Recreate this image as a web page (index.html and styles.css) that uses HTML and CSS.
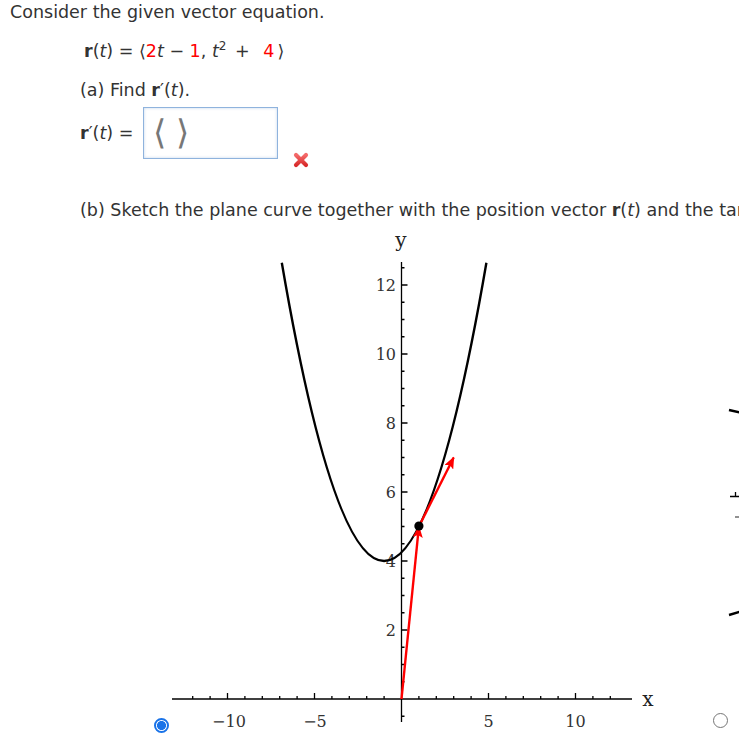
FILE: index.html
```html
<!DOCTYPE html>
<html>
<head>
<meta charset="utf-8">
<link rel="stylesheet" href="styles.css">
</head>
<body>
<div class="page">
  <p class="intro">Consider the given vector equation.</p>
  <p class="eq"><b>r</b>(<i>t</i>) = ⟨<span class="red">2</span><i>t</i> − <span class="red">1</span>, <i>t</i><sup>2</sup> <span class="plus">+</span> <span class="red">4</span><span class="close">⟩</span></p>
  <p class="part">(a) Find <b>r</b>′(<i>t</i>).</p>
  <div class="answer-row">
    <span class="lhs"><b>r</b>′(<i>t</i>) =</span>
    <div class="box"><span class="brk">⟨</span><span class="brk">⟩</span></div>
    <svg class="xmark" width="16" height="16" viewBox="0 0 16 16">
      <defs>
        <linearGradient id="xg" x1="0" y1="0" x2="0" y2="1">
          <stop offset="0" stop-color="#f46a6a"/>
          <stop offset="1" stop-color="#d92c2c"/>
        </linearGradient>
      </defs>
      <path d="M3 3 L13 13 M13 3 L3 13" stroke="url(#xg)" stroke-width="4.2" stroke-linecap="round"/>
    </svg>
  </div>
  <p class="part partb">(b) Sketch the plane curve together with the position vector <b>r</b>(<i>t</i>) and the tangent vector <b>r</b>′(<i>t</i>) for the given value of <i>t</i>.</p>
  <div class="graphs">
    <span class="radio on"></span>
    <svg class="graph" width="535" height="514" viewBox="170 228 535 514">
      <defs>
        <marker id="ah" viewBox="0 0 12 10" refX="11" refY="5" markerWidth="12" markerHeight="10" markerUnits="userSpaceOnUse" orient="auto">
          <path d="M0 0 L12 5 L0 10 L2.5 5 Z" fill="#f00"/>
        </marker>
      </defs>
      <g stroke="#000" stroke-width="1.3" fill="none">
        <path d="M172 699 H632"/>
        <path d="M401.5 262 V722"/>
        <path d="M192.7 699v-3 M210.1 699v-3 M227.5 699v-6 M244.9 699v-3 M262.3 699v-3 M279.7 699v-3 M297.1 699v-3 M314.5 699v-6 M331.9 699v-3 M349.3 699v-3 M366.7 699v-3 M384.1 699v-3 M418.9 699v-3 M436.3 699v-3 M453.7 699v-3 M471.1 699v-3 M488.5 699v-6 M505.9 699v-3 M523.3 699v-3 M540.7 699v-3 M558.1 699v-3 M575.5 699v-6 M592.9 699v-3 M610.3 699v-3"/>
        <path d="M401.5 716.25h3 M401.5 681.75h3 M401.5 664.5h3 M401.5 647.25h3 M401.5 630h6 M401.5 612.75h3 M401.5 595.5h3 M401.5 578.25h3 M401.5 561h6 M401.5 543.75h3 M401.5 526.5h3 M401.5 509.25h3 M401.5 492h6 M401.5 474.75h3 M401.5 457.5h3 M401.5 440.25h3 M401.5 423h6 M401.5 405.75h3 M401.5 388.5h3 M401.5 371.25h3 M401.5 354h6 M401.5 336.75h3 M401.5 319.5h3 M401.5 302.25h3 M401.5 285h6 M401.5 267.75h3"/>
      </g>
      <g class="lbl">
        <text x="396" y="291" text-anchor="end">12</text>
        <text x="396" y="360" text-anchor="end">10</text>
        <text x="396" y="429" text-anchor="end">8</text>
        <text x="396" y="498" text-anchor="end">6</text>
        <text x="396" y="567" text-anchor="end">4</text>
        <text x="396" y="636" text-anchor="end">2</text>
        <text x="229" y="727" text-anchor="middle">−10</text>
        <text x="315" y="727" text-anchor="middle">−5</text>
        <text x="488.5" y="727" text-anchor="middle">5</text>
        <text x="575.5" y="727" text-anchor="middle">10</text>
        <text class="axl" x="401" y="247" text-anchor="middle">y</text>
        <text class="axl" x="648" y="706" text-anchor="middle">x</text>
      </g>
      <path d="M281.8 262.8 Q384.1 859.2 486.4 262.8" stroke="#000" stroke-width="2.4" fill="none"/>
      <path d="M401.5 699 L418.9 526.5" stroke="#f00" stroke-width="2.4" fill="none" marker-end="url(#ah)"/>
      <path d="M418.9 526.5 L453.7 457.5" stroke="#f00" stroke-width="2.4" fill="none" marker-end="url(#ah)"/>
      <circle cx="418.9" cy="526" r="4.6" fill="#000"/>
    </svg>
    <span class="radio off"></span>
    <svg class="graph2" width="40" height="514" viewBox="727 228 40 514">
      <g stroke="#000" fill="none">
        <path d="M728 410 L745 414" stroke-width="2.4"/>
        <path d="M729 496.5 H745 M734.5 496.5 V492" stroke-width="1.3"/>
        <path d="M734 517 H745" stroke-width="1.3" stroke="#555"/>
        <path d="M728 615 L745 610" stroke-width="2.4"/>
      </g>
    </svg>
  </div>
</div>
</body>
</html>
```

FILE: styles.css
```css
html, body {
  margin: 0;
  padding: 0;
  background: #fff;
  overflow: hidden;
}
.page {
  width: 739px;
  height: 742px;
  overflow: hidden;
  font-family: "DejaVu Sans", Verdana, sans-serif;
  font-size: 17.5px;
  color: #333;
}
p { margin: 0; white-space: nowrap; }
.intro {
  padding: 1px 0 0 10px;
  line-height: 22px;
}
.eq {
  margin-top: 17px;
  padding-left: 84px;
  line-height: 22px;
}
.eq .plus { margin: 0 8px 0 3px; }
.eq .close { margin-left: 3px; }
.eq sup { font-size: 12px; line-height: 0; vertical-align: 7px; }
.red { color: #f00; }
b { font-weight: bold; }
.part {
  padding-left: 80px;
  line-height: 22px;
}
.eq + .part { margin-top: 17px; }
.answer-row {
  display: flex;
  align-items: center;
  padding-left: 80px;
  margin-top: 6px;
  height: 52px;
}
.lhs { margin-right: 10px; }
.box {
  box-sizing: border-box;
  width: 135px;
  height: 52px;
  border: 1px solid #8fb3dd;
  box-shadow: inset 0 0 3px rgba(120,160,210,0.45);
  display: flex;
  align-items: center;
  gap: 10px;
  padding: 0 0 3px 9px;
  color: #777;
  font-size: 34px;
  font-weight: 200;
}
.xmark {
  align-self: flex-end;
  margin: 0 0 -9px 15px;
}
.partb {
  margin-top: 40px;
  overflow: hidden;
}
.graphs {
  display: flex;
  align-items: flex-end;
  margin-top: 7px;
  height: 514px;
}
.radio {
  box-sizing: border-box;
  width: 15px;
  height: 15px;
  border-radius: 50%;
  flex: none;
}
.radio.on {
  margin: 0 1px 9px 154px;
  border: 2px solid #1a73e8;
  background: radial-gradient(circle, #1a73e8 0 4.2px, #fff 4.8px);
}
.radio.off {
  margin: 0 0 14px 8px;
  border: 1px solid #767676;
  background: #fff;
}
.graph, .graph2 { flex: none; display: block; }
.lbl text {
  font-family: "DejaVu Serif", "Liberation Serif", serif;
  font-size: 16px;
  fill: #333;
}
.lbl text.axl { font-size: 20px; fill: #222; }
```
